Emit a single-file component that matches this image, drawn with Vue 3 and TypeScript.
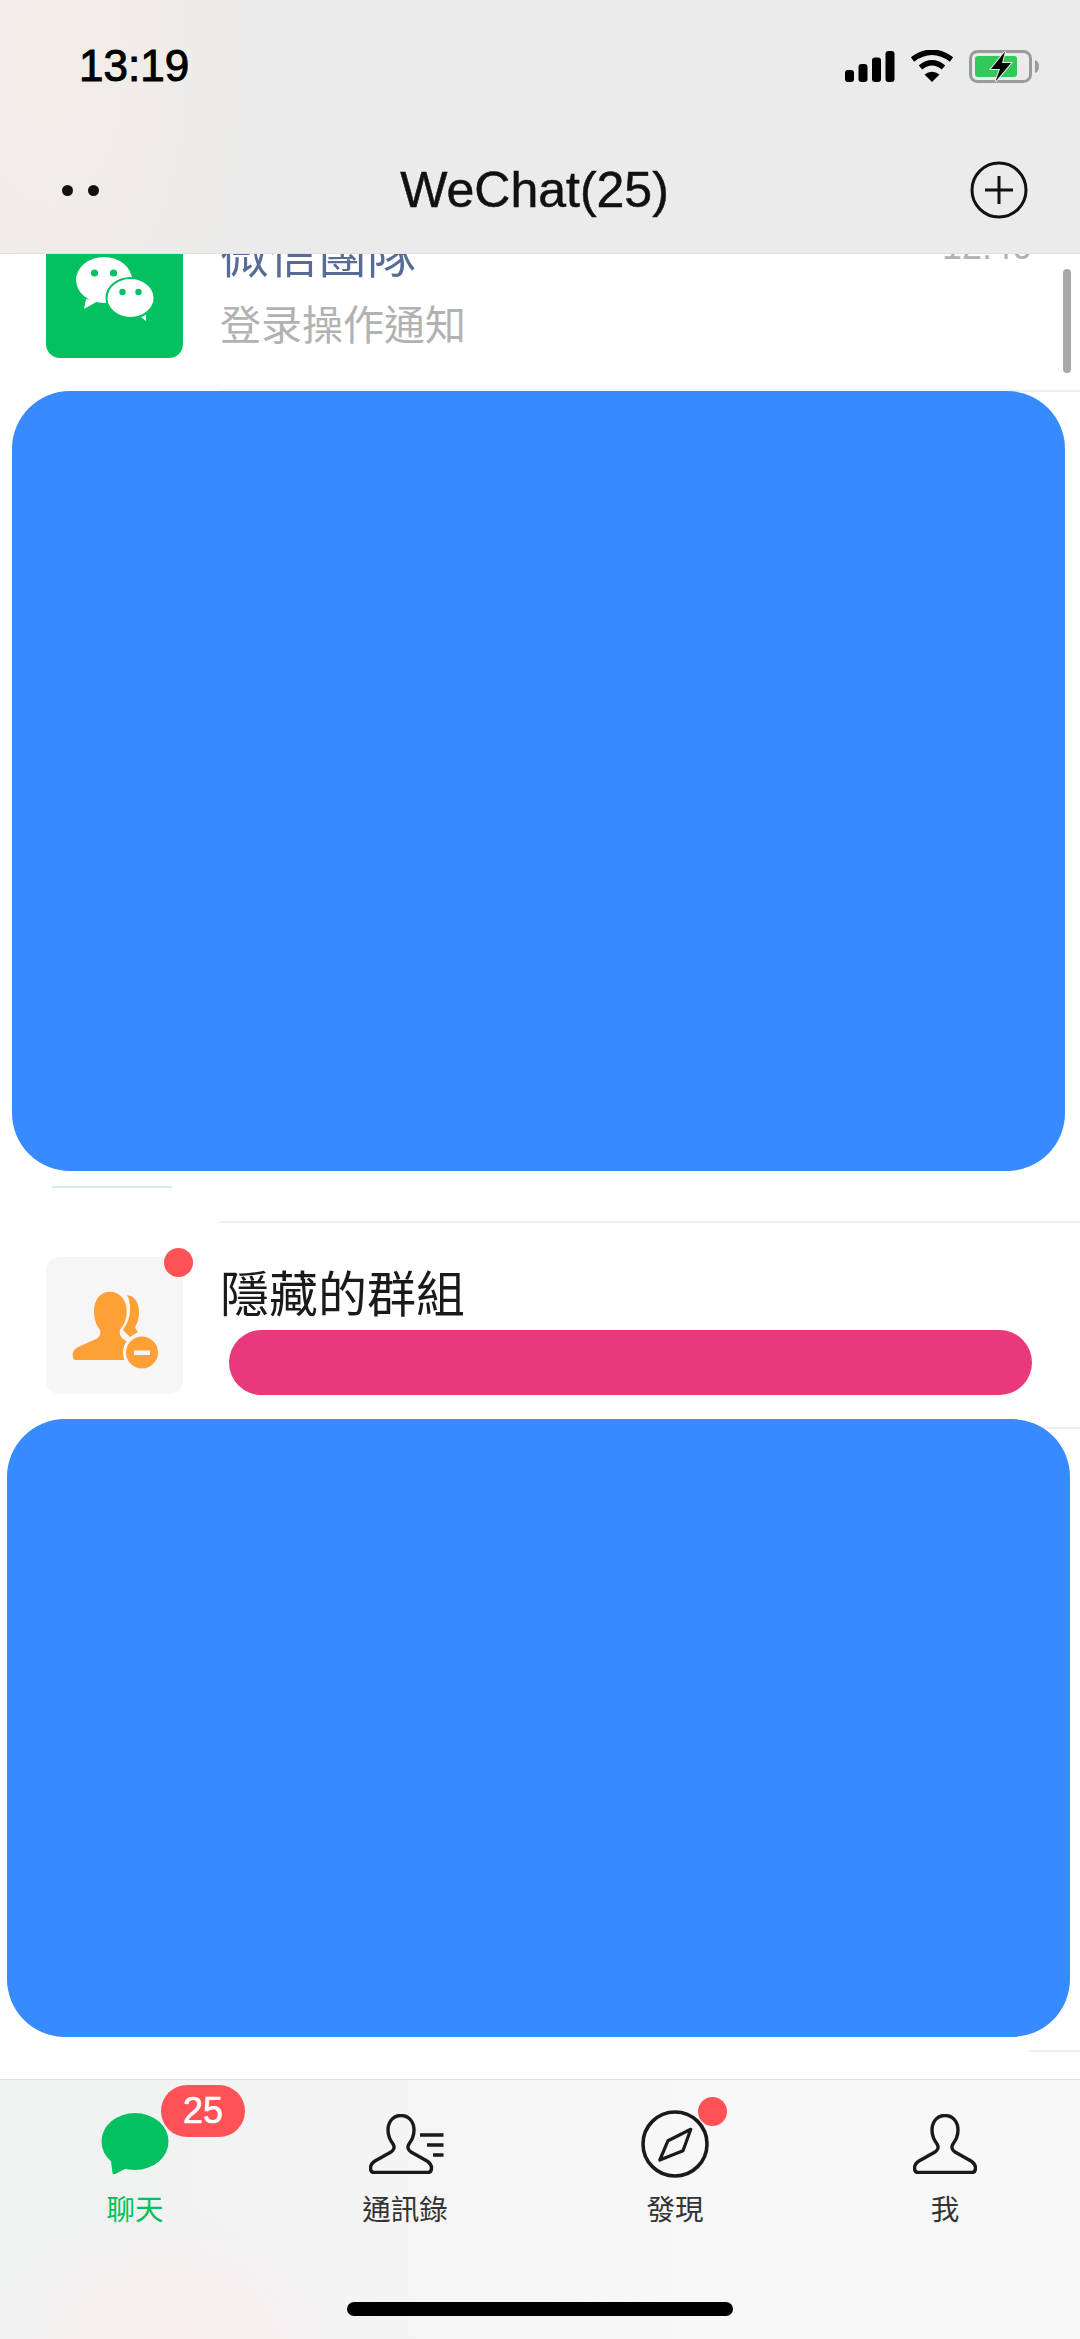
<script setup lang="ts">
const tabs = [
  { key: 'chats', label: '聊天' },
  { key: 'contacts', label: '通訊錄' },
  { key: 'discover', label: '發現' },
  { key: 'me', label: '我' }
];

const personPath = 'M32 1.5C40 1.5 45 8 45 16C45 22 43 26 40 30C38 33 39 36 42 38L58 47C61 49 62.5 51 62.5 54C62.5 57.5 61 58.5 59 58.5L5 58.5C3 58.5 1.5 57.5 1.5 54C1.5 51 3 49 6 47L22 38C25 36 26 33 24 30C21 26 19 22 19 16C19 8 24 1.5 32 1.5Z';
</script>

<template>
  <div class="phone">
    <header class="top">
      <div class="status">
        <span class="clock">13:19</span>
        <div class="status-icons">
          <svg width="50" height="31" viewBox="0 0 50 31">
            <rect x="0" y="19" width="9" height="12" rx="3" />
            <rect x="13.5" y="13" width="9" height="18" rx="3" />
            <rect x="27" y="6.5" width="9" height="24.5" rx="3" />
            <rect x="40.5" y="0" width="9" height="31" rx="3" />
          </svg>
          <svg width="44" height="32" viewBox="0 0 44 32">
            <path d="M2.5 9.5Q22 -5 41.5 9.5" fill="none" stroke="#000" stroke-width="5.5" />
            <path d="M10.5 17.5Q22 8 33.5 17.5" fill="none" stroke="#000" stroke-width="5.5" />
            <path d="M22 32L14.5 24.5Q22 19 29.5 24.5Z" />
          </svg>
          <svg width="70" height="33" viewBox="0 0 70 33">
            <rect x="1.5" y="1.5" width="60" height="30" rx="7" fill="none" stroke="#9a9a9a" stroke-width="3" />
            <rect x="6" y="6" width="42" height="21" rx="3" fill="#34c759" />
            <path d="M66 10C69 11 70 14 70 16.5C70 19 69 22 66 23Z" fill="#9a9a9a" />
            <path d="M36 1.5L22 19L31 19L26.5 31.5L42 13L33 13Z" stroke="#ebebeb" stroke-width="2" paint-order="stroke" />
          </svg>
        </div>
      </div>
      <div class="nav">
        <div class="more"><i></i><i></i></div>
        <h1 class="title">WeChat(25)</h1>
        <svg class="plus" width="58" height="58" viewBox="0 0 58 58" fill="none" stroke="#111" stroke-width="3">
          <circle cx="29" cy="29" r="27" />
          <path d="M15 29H43M29 15V43" />
        </svg>
      </div>
    </header>

    <main class="list">
      <div class="scrollbar"></div>

      <div class="row first">
        <div class="avatar green">
          <svg width="137" height="137" viewBox="0 0 137 137">
            <path d="M40 78L38 88L52 80Z" fill="#fff" />
            <ellipse cx="58" cy="59" rx="28" ry="23" fill="#fff" />
            <circle cx="48.5" cy="52" r="3.6" fill="#03c160" />
            <circle cx="67.5" cy="52" r="3.6" fill="#03c160" />
            <path d="M90 92L100 100L100 88Z" fill="#fff" />
            <ellipse cx="84.5" cy="77" rx="24" ry="20" fill="#fff" stroke="#03c160" stroke-width="2" />
            <circle cx="76.5" cy="71" r="3.2" fill="#03c160" />
            <circle cx="92.5" cy="71" r="3.2" fill="#03c160" />
          </svg>
        </div>
        <div class="row-text">
          <div class="name-line">
            <span class="name official">微信團隊</span>
            <span class="time">12:40</span>
          </div>
          <div class="sub">登录操作通知</div>
        </div>
      </div>

      <div class="redact first-block"></div>
      <div class="peek"></div>

      <div class="row hidden-groups">
        <div class="avatar grey">
          <svg width="137" height="137" viewBox="0 0 137 137">
            <path fill="#fda136" d="M64 34.7C73 34.7 80.7 42 80.7 54C80.7 62 78 68 74 73C73 78 75 81 80 84L85 87L80 103L30 103C27.5 103 26.7 101 26.7 98C26.7 94 29 91.5 33 89.5L50 82C54 80 55 76 54 73C50 68 48 62 48 54C48 42 55 34.7 64 34.7Z" />
            <path fill="#fda136" d="M81 38C89 39 93 46 93 55C93 62 91 67 89 70C90 73 91 74 92 75L84 80L77 73C81 66 84 62 84 52C84 46 83 41 81 38Z" />
            <circle cx="96" cy="95.5" r="17.5" fill="#fda136" stroke="#f6f6f6" stroke-width="3" />
            <rect x="88" y="93.5" width="16" height="4.5" fill="#f6f6f6" />
          </svg>
          <span class="dot avatar-dot"></span>
        </div>
        <div class="row-text">
          <div class="name">隱藏的群組</div>
          <div class="pink"></div>
        </div>
      </div>

      <div class="redact second-block"></div>
      <div class="sep-tail"></div>
    </main>

    <footer class="tabbar">
      <div v-for="(tab, index) in tabs" :key="tab.key" class="tab" :class="{ active: index === 0 }">
        <div class="tab-icon">
          <svg v-if="tab.key === 'chats'" class="chat-icon" width="68" height="62" viewBox="0 0 68 62">
            <ellipse cx="34" cy="28.5" rx="33.5" ry="28.5" fill="#03c160" />
            <path d="M10 48L11.5 60C11.5 61.5 13 61.5 14 61L26 55Z" fill="#03c160" />
          </svg>
          <svg v-else-if="tab.key === 'contacts'" class="contacts-icon" width="76" height="60" viewBox="0 0 76 60" fill="none" stroke="#1a1a1a" stroke-width="3.4">
            <path :d="personPath" />
            <path d="M51 21H74.5M58 31H74.5M64 41H74.5" stroke-width="3.5" />
          </svg>
          <svg v-else-if="tab.key === 'discover'" width="68" height="68" viewBox="0 0 68 68" fill="none" stroke="#1a1a1a" stroke-width="3.6">
            <circle cx="34" cy="34" r="32" />
            <path d="M49.8 19.3L42 40.7L18.8 50L27 30.7Z" stroke-width="3.2" stroke-linejoin="round" />
          </svg>
          <svg v-else width="64" height="60" viewBox="0 0 64 60" fill="none" stroke="#1a1a1a" stroke-width="3.4">
            <path :d="personPath" />
          </svg>
        </div>
        <span class="tab-label">{{ tab.label }}</span>
        <span v-if="tab.key === 'chats'" class="badge">25</span>
        <span v-if="tab.key === 'discover'" class="dot tab-dot"></span>
      </div>
      <div class="home-bar"></div>
    </footer>
  </div>
</template>

<style scoped>
.phone {
  width: 1080px;
  height: 2339px;
  display: flex;
  flex-direction: column;
  overflow: hidden;
  background: #fff;
  font-family: "Liberation Sans", "Noto Sans CJK TC", sans-serif;
}

.top {
  height: 254px;
  flex: none;
  box-sizing: border-box;
  border-bottom: 1px solid #e2e2e2;
  background: radial-gradient(ellipse 220px 420px at 50px 60px, #f3ede7, rgba(235, 235, 235, 0)), #ebebeb;
}

.status {
  height: 132px;
  display: flex;
  align-items: center;
  justify-content: space-between;
  padding: 0 41px 0 79px;
}

.clock {
  font-size: 44px;
  font-weight: 400;
  color: #000;
  -webkit-text-stroke: 1px #000;
}

.status-icons {
  display: flex;
  align-items: center;
  gap: 15px;
}

.nav {
  height: 116px;
  display: flex;
  align-items: center;
  justify-content: space-between;
  padding: 0 52px 3px 62px;
}

.more {
  display: flex;
  gap: 15px;
}

.more i {
  width: 11px;
  height: 11px;
  border-radius: 50%;
  background: #111;
}

.title {
  margin: 0;
  font-size: 50px;
  font-weight: 400;
  color: #111;
  -webkit-text-stroke: 0.5px #111;
}

.list {
  position: relative;
  flex: 1;
  min-height: 0;
  overflow: hidden;
}

.scrollbar {
  position: absolute;
  top: 15px;
  right: 9px;
  width: 8px;
  height: 104px;
  border-radius: 4px;
  background: #a8a8a8;
}

.row {
  display: flex;
  height: 208px;
  box-sizing: border-box;
  padding: 37px 0 0 46px;
  gap: 37px;
  position: relative;
}

.row::after {
  content: "";
  position: absolute;
  left: 219px;
  right: 0;
  bottom: 0;
  height: 2px;
  background: #efefef;
}

.first {
  margin-top: -70px;
}

.avatar {
  position: relative;
  width: 137px;
  height: 137px;
  flex: none;
  border-radius: 14px;
}

.green {
  background: #03c160;
}

.grey {
  background: #f6f6f6;
}

.row-text {
  flex: 1;
  min-width: 0;
  padding: 5px 48px 0 0;
}

.name-line {
  display: flex;
  justify-content: space-between;
}

.name {
  font-size: 49px;
  line-height: 60px;
  color: #1a1a1a;
}

.official {
  color: #576b95;
}

.time {
  font-size: 36px;
  line-height: 42px;
  color: #b2b2b2;
}

.sub {
  margin-top: 15px;
  font-size: 41px;
  line-height: 50px;
  color: #b2b2b2;
}

.redact {
  position: relative;
  background: #388aff;
}

.first-block {
  height: 780px;
  margin: -1px 15px 0 12px;
  border-radius: 58px;
}

.peek {
  height: 2px;
  width: 120px;
  margin: 15px 0 33px 52px;
  background: #d8efe6;
}

.hidden-groups {
  padding-top: 36px;
}

.hidden-groups::before {
  content: "";
  position: absolute;
  left: 219px;
  right: 0;
  top: 0;
  height: 2px;
  background: #efefef;
}

.hidden-groups .row-text {
  padding-top: 8px;
}

.dot {
  position: absolute;
  width: 29px;
  height: 29px;
  border-radius: 50%;
  background: #ff5257;
}

.avatar-dot {
  top: -9px;
  right: -10px;
}

.pink {
  height: 65px;
  margin: 5px 0 0 9px;
  border-radius: 33px;
  background: #e8397d;
}

.second-block {
  height: 618px;
  margin: -10px 10px 0 7px;
  border-radius: 58px;
}

.sep-tail {
  height: 2px;
  margin: 13px 0 0 1029px;
  background: #efefef;
}

.tabbar {
  position: relative;
  height: 260px;
  flex: none;
  box-sizing: border-box;
  display: grid;
  grid-template-columns: repeat(4, 270px);
  border-top: 1px solid #e2e2e2;
  background:
    radial-gradient(ellipse 180px 130px at 175px 260px, #f9eeee, rgba(249, 238, 238, 0)),
    linear-gradient(90deg, #eff0f0, #f5f5f6 40%, #f8f8f8 70%);
}

.tab {
  position: relative;
  display: flex;
  flex-direction: column;
  align-items: center;
  padding-top: 30px;
  color: #333;
}

.tab.active {
  color: #03c160;
}

.tab-icon {
  height: 68px;
  display: flex;
  align-items: center;
}

.contacts-icon {
  margin-left: 3px;
}

.tab-label {
  margin-top: 12px;
  font-size: 28.5px;
  line-height: 40px;
}

.badge {
  position: absolute;
  left: 161px;
  top: 5px;
  width: 84px;
  height: 52px;
  border-radius: 26px;
  background: #ff5257;
  color: #fff;
  font-size: 36px;
  line-height: 52px;
  text-align: center;
  -webkit-text-stroke: 0.6px #fff;
}

.tab-dot {
  left: 158px;
  top: 17px;
}

.home-bar {
  position: absolute;
  left: 347px;
  bottom: 23px;
  width: 386px;
  height: 14px;
  border-radius: 7px;
  background: #000;
}
</style>
